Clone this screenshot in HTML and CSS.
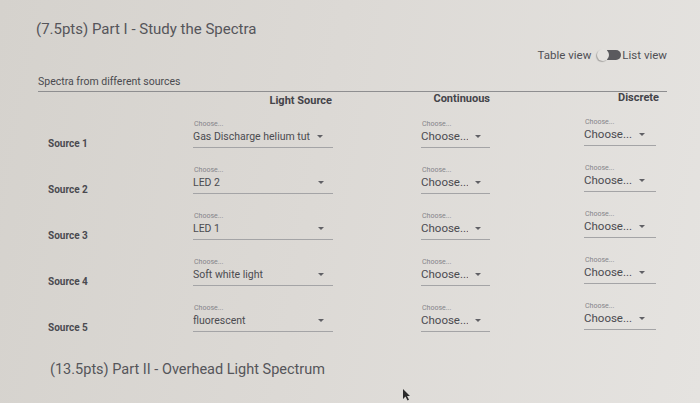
FILE: index.html
```html
<!DOCTYPE html>
<html>
<head>
<meta charset="utf-8">
<link rel="stylesheet" href="styles.css">
</head>
<body>
<div class="page">
  <h2 class="title">(7.5pts) Part I - Study the Spectra</h2>
  <div class="view-toggle">
    <span class="tv">Table view</span>
    <span class="switch"><span class="thumb"></span></span>
    <span class="lv">List view</span>
  </div>
  <div class="caption">Spectra from different sources</div>
  <div class="grid">
    <div class="hcell"></div>
    <div class="hcell h-ls">Light Source</div>
    <div class="hcell h-cont">Continuous</div>
    <div class="hcell h-disc">Discrete</div>

    <div class="src">Source 1</div>
    <div class="cell c-ls"><div class="sel w-ls"><div class="lab">Choose...</div><div class="val"><span class="txt">Gas Discharge helium tut</span><span class="arr tight"></span></div></div></div>
    <div class="cell c-cont"><div class="sel w-cont"><div class="lab">Choose...</div><div class="val"><span class="txt">Choose...</span><span class="arr tight"></span></div></div></div>
    <div class="cell c-disc"><div class="sel w-disc"><div class="lab">Choose...</div><div class="val"><span class="txt">Choose...</span><span class="arr tight"></span></div></div></div>

    <div class="src">Source 2</div>
    <div class="cell c-ls"><div class="sel w-ls"><div class="lab">Choose...</div><div class="val"><span class="txt">LED 2</span><span class="arr"></span></div></div></div>
    <div class="cell c-cont"><div class="sel w-cont"><div class="lab">Choose...</div><div class="val"><span class="txt">Choose...</span><span class="arr tight"></span></div></div></div>
    <div class="cell c-disc"><div class="sel w-disc"><div class="lab">Choose...</div><div class="val"><span class="txt">Choose...</span><span class="arr tight"></span></div></div></div>

    <div class="src">Source 3</div>
    <div class="cell c-ls"><div class="sel w-ls"><div class="lab">Choose...</div><div class="val"><span class="txt">LED 1</span><span class="arr"></span></div></div></div>
    <div class="cell c-cont"><div class="sel w-cont"><div class="lab">Choose...</div><div class="val"><span class="txt">Choose...</span><span class="arr tight"></span></div></div></div>
    <div class="cell c-disc"><div class="sel w-disc"><div class="lab">Choose...</div><div class="val"><span class="txt">Choose...</span><span class="arr tight"></span></div></div></div>

    <div class="src">Source 4</div>
    <div class="cell c-ls"><div class="sel w-ls"><div class="lab">Choose...</div><div class="val"><span class="txt">Soft white light</span><span class="arr"></span></div></div></div>
    <div class="cell c-cont"><div class="sel w-cont"><div class="lab">Choose...</div><div class="val"><span class="txt">Choose...</span><span class="arr tight"></span></div></div></div>
    <div class="cell c-disc"><div class="sel w-disc"><div class="lab">Choose...</div><div class="val"><span class="txt">Choose...</span><span class="arr tight"></span></div></div></div>

    <div class="src">Source 5</div>
    <div class="cell c-ls"><div class="sel w-ls"><div class="lab">Choose...</div><div class="val"><span class="txt">fluorescent</span><span class="arr"></span></div></div></div>
    <div class="cell c-cont"><div class="sel w-cont"><div class="lab">Choose...</div><div class="val"><span class="txt">Choose...</span><span class="arr tight"></span></div></div></div>
    <div class="cell c-disc"><div class="sel w-disc"><div class="lab">Choose...</div><div class="val"><span class="txt">Choose...</span><span class="arr tight"></span></div></div></div>
  </div>
  <h2 class="title2">(13.5pts) Part II - Overhead Light Spectrum</h2>
</div>
<svg class="cursor" width="9" height="13" viewBox="0 0 9 13"><path d="M1 1 L1 11 L3.5 8.5 L5.5 12.5 L7 11.8 L5 8 L8 8 Z" fill="#2a2a2a"/></svg>
</body>
</html>
```
FILE: styles.css
```css
html, body {
  margin: 0;
  padding: 0;
}
body {
  width: 700px;
  height: 403px;
  overflow: hidden;
  position: relative;
  background: linear-gradient(100deg, #d5d2cd 0%, #dcd9d5 45%, #e5e3e0 100%);
  font-family: Roboto, "Liberation Sans", sans-serif;
  color: #4b4b50;
}
.page {
  padding: 19px 33px 0 38px;
}
.title {
  margin: 0 0 0 -2px;
  font-size: 15px;
  font-weight: 400;
  line-height: 20px;
  color: #55555a;
}
.view-toggle {
  display: flex;
  justify-content: flex-end;
  align-items: center;
  margin-top: 6px;
  height: 20px;
  font-size: 11.5px;
  color: #505055;
}
.tv { margin-right: 7px; }
.switch {
  position: relative;
  width: 23px;
  height: 10px;
  border-radius: 5px;
  background: linear-gradient(90deg, #d9d7d4 0 40%, #5a5a5e 40%);
  margin-right: 1px;
}
.thumb {
  position: absolute;
  left: -1px;
  top: -1px;
  width: 12px;
  height: 12px;
  border-radius: 50%;
  background: #e4e2df;
  box-shadow: -1px 1px 1px rgba(0,0,0,0.25);
}
.caption {
  margin-top: 10px;
  font-size: 10.5px;
  line-height: 14px;
  padding-bottom: 2px;
  border-bottom: 1px solid #8e8e90;
  color: #4a4a4f;
}
.grid {
  display: grid;
  grid-template-columns: 155px 140px 158px 176px;
  grid-template-rows: 20px repeat(5, 46px);
}
.hcell {
  font-size: 11px;
  font-weight: 700;
  line-height: 14px;
  padding-top: 2px;
  color: #444449;
}
.h-ls { text-align: right; padding-right: 1px; }
.h-cont { text-align: right; padding-right: 1px; padding-top: 0; }
.h-disc { text-align: right; padding-right: 8px; margin-top: -3px; }
.src {
  align-self: center;
  padding: 16px 0 0 10px;
  font-size: 10px;
  font-weight: 700;
  color: #4a4a50;
}
.cell {
  display: flex;
  align-items: center;
  margin-top: -4px;
}
.c-ls { justify-content: flex-start; }
.c-cont { justify-content: flex-end; padding-right: 1px; }
.c-disc { justify-content: flex-start; padding-left: 93px; margin-top: -7px; }
.sel {
  border-bottom: 1px solid #a4a4a6;
  padding-bottom: 3px;
}
.w-ls { width: 140px; }
.w-cont { width: 69px; }
.w-disc { width: 72px; }
.lab {
  font-size: 7px;
  line-height: 10px;
  color: #85858a;
  padding-left: 1px;
}
.val {
  display: flex;
  align-items: center;
  font-size: 10.5px;
  line-height: 15px;
  color: #4b4b50;
  white-space: nowrap;
}
.txt {
  overflow: hidden;
  text-overflow: clip;
}
.w-cont .val, .w-disc .val { font-size: 11.5px; }
.arr {
  flex: none;
  margin-left: auto;
  margin-right: 9px;
  width: 0;
  height: 0;
  border-left: 3.5px solid transparent;
  border-right: 3.5px solid transparent;
  border-top: 3.5px solid #606065;
}
.arr.tight {
  margin-left: 7px;
}
.title2 {
  margin: 18px 0 0 12px;
  font-size: 14.5px;
  font-weight: 400;
  line-height: 20px;
  color: #55555a;
}
.cursor {
  position: absolute;
  left: 402px;
  top: 388px;
}
```
